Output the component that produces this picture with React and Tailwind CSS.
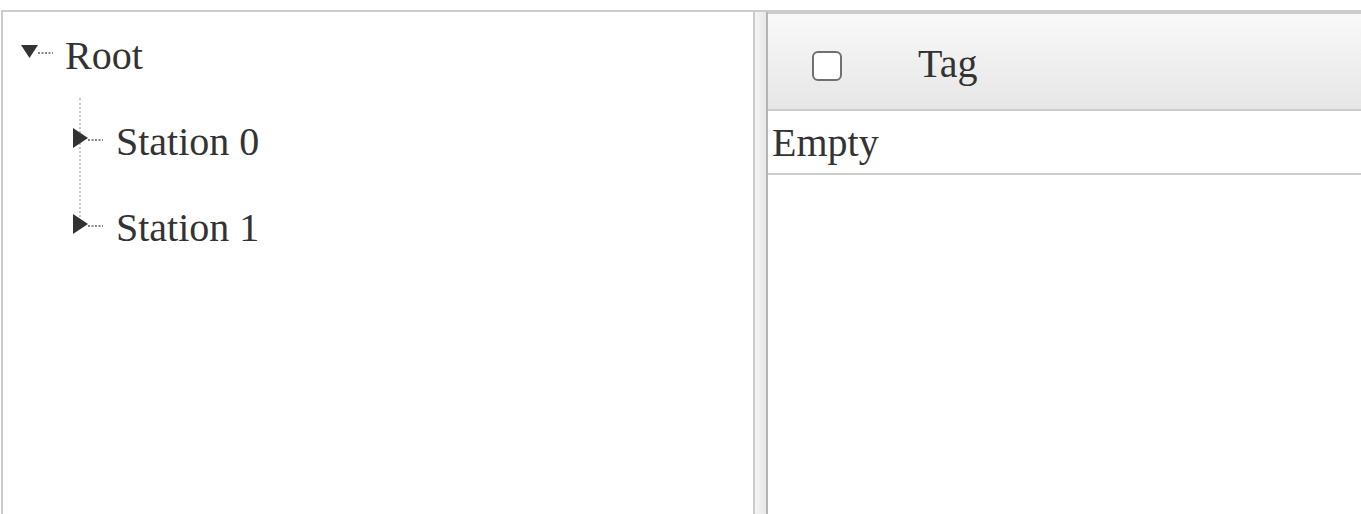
import React from "react";

const serif = { fontFamily: '"Liberation Serif", "Times New Roman", serif' };

function OpenIcon() {
  return (
    <svg width="33" height="14" viewBox="0 0 33 14" className="mt-[9px] shrink-0">
      <polygon points="0,0 17,0 8.5,13" fill="#333" />
      <line x1="17" y1="8" x2="32" y2="8" stroke="#888" strokeWidth="2" strokeDasharray="2 1.5" />
    </svg>
  );
}

function ClosedIcon() {
  return (
    <svg width="30" height="20" viewBox="0 0 30 20" className="mt-[6px] shrink-0">
      <polygon points="0,0 15,10 0,20" fill="#333" />
      <line x1="15" y1="12" x2="30" y2="12" stroke="#888" strokeWidth="2" strokeDasharray="2 1.5" />
    </svg>
  );
}

function TreeRow({ open, label, className = "" }) {
  return (
    <div className={"flex items-start h-[40px] " + className}>
      {open ? <OpenIcon /> : <ClosedIcon />}
      <span className={"leading-[40px] whitespace-nowrap " + (open ? "ml-[11px]" : "ml-[13px]")}>{label}</span>
    </div>
  );
}

export default function App() {
  const stations = ["Station 0", "Station 1"];
  return (
    <div className="w-[1361px] h-[514px] bg-white overflow-hidden text-[40px] text-[#333]" style={serif}>
      <div className="mt-[10px] ml-[1px] h-[504px] flex border-t-2 border-l-2 border-[#ccc]">
        {/* tree */}
        <div className="w-[750px] shrink-0 pl-[18px] pt-[24px]">
          <TreeRow open label="Root" />
          <div className="flex ml-[58px] mt-[22px]">
            <div className="w-0 h-[119px] border-l-2 border-dotted border-[#c4c4c4] shrink-0" />
            <div className="-ml-[8px]">
              {stations.map((s, i) => (
                <TreeRow key={s} label={s} className={i === 0 ? "mt-[24px]" : "mt-[46px]"} />
              ))}
            </div>
          </div>
        </div>

        {/* splitter */}
        <div className="w-[15px] shrink-0 border-l-2 border-r-2 border-l-[#ccc] border-r-[#b4b4b4] bg-gradient-to-r from-[#f4f4f4] to-[#e8e8e8]" />

        {/* table */}
        <div className="flex-1 border-t-2 border-[#ccc]">
          <div className="h-[97px] flex items-start pl-[44px] border-b-2 border-[#ccc] bg-gradient-to-b from-[#f9f9f9] to-[#e6e6e6]">
            <div className="mt-[37px] w-[30px] h-[30px] rounded-[6px] border-[2.5px] border-[#707070] bg-white shrink-0" />
            <span className="mt-[30px] ml-[76px] leading-[40px]">Tag</span>
          </div>
          <div className="h-[64px] pt-[12px] pl-[4px] border-b-2 border-[#ccc] leading-[40px]">Empty</div>
        </div>
      </div>
    </div>
  );
}
